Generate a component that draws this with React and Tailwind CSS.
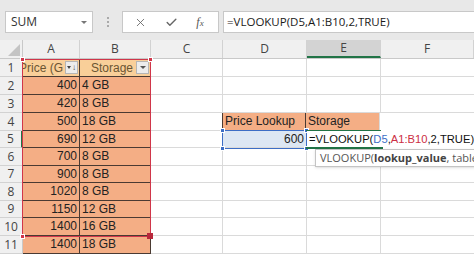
import { X, Check } from 'lucide-react';

const ROW_H = [18, 18, 18, 18, 17, 18, 17, 18, 17, 18, 18];
const PRICES = [400, 420, 500, 690, 700, 900, 1020, 1150, 1400, 1400];
const STORAGE = ['4 GB', '8 GB', '18 GB', '12 GB', '8 GB', '8 GB', '8 GB', '12 GB', '16 GB', '18 GB'];

const cellFont = { fontFamily: '"Liberation Sans", Arial, sans-serif' };
const uiFont = { fontFamily: '"Open Sans", "Liberation Sans", sans-serif' };

function Handle({ className }) {
  return <div className={`absolute w-[5px] h-[5px] border border-white ${className}`} />;
}

function Toolbar() {
  return (
    <div className="h-[40px] bg-[#e8e8e8] flex items-start pt-[11px] pl-[5px]" style={uiFont}>
      <div className="w-[88px] h-[22px] bg-white border border-[#c8c8c8] flex items-center justify-between pl-[5px] pr-[5px]">
        <span className="text-[12px] text-[#333]">SUM</span>
        <span className="w-0 h-0 border-l-[3px] border-r-[3px] border-t-[3px] border-l-transparent border-r-transparent border-t-[#777]" />
      </div>
      <div className="w-[29px] h-[22px] flex flex-col items-center justify-center gap-[2px]">
        <span className="w-[2px] h-[2px] bg-[#aaa]" />
        <span className="w-[2px] h-[2px] bg-[#aaa]" />
        <span className="w-[2px] h-[2px] bg-[#aaa]" />
      </div>
      <div className="w-[97px] h-[22px] bg-white border border-[#c8c8c8] flex items-center">
        <div className="w-[33px] flex justify-center pl-[2px]">
          <X size={13} strokeWidth={1.6} color="#666" />
        </div>
        <div className="w-[30px] flex justify-center">
          <Check size={13} strokeWidth={2.6} color="#666" />
        </div>
        <div className="w-[28px] flex justify-center">
          <span className="text-[12px] italic text-[#555]" style={{ fontFamily: '"Liberation Serif", serif' }}>
            f<span className="text-[9px]">x</span>
          </span>
        </div>
      </div>
      <div className="ml-[4px] flex-1 h-[22px] bg-white border border-[#c8c8c8] border-r-0 flex items-center pl-[3px]">
        <span className="text-[11.5px] text-[#1a1a1a] whitespace-nowrap">=VLOOKUP(D5,A1:B10,2,TRUE)</span>
      </div>
    </div>
  );
}

function HeaderRow() {
  const cols = [
    ['A', 'w-[57px]'],
    ['B', 'w-[71px]'],
    ['C', 'w-[72px]'],
    ['D', 'w-[84px]'],
    ['E', 'w-[74px]'],
    ['F', 'flex-1'],
  ];
  return (
    <div className="h-[19px] flex bg-[#f0f0f0] border-b border-[#c9c9c9]" style={uiFont}>
      <div className="w-[23px] border-r border-[#c9c9c9] relative">
        <svg className="absolute right-[2px] bottom-[2px]" width="12" height="12">
          <polygon points="12,0 12,12 0,12" fill="#c4c4c4" />
        </svg>
      </div>
      {cols.map(([k, w]) => (
        <div
          key={k}
          className={`${w} flex items-center justify-center text-[12px] text-[#444] border-r border-[#d2d2d2] ${
            k === 'E' ? 'bg-[#d3d3d3] border-b-2 border-b-[#217346]' : ''
          }`}
        >
          {k}
        </div>
      ))}
    </div>
  );
}

function Row({ n, h }) {
  const dark = 'border-[#4a3a32]';
  const grid = 'border-[#dadada]';
  const i = n - 2;
  let a = null;
  let b = null;
  let aCls = `w-[57px] border-r border-b ${grid}`;
  let bCls = `w-[71px] border-r border-b ${grid}`;
  let dCls = `w-[84px] border-r border-b ${grid}`;
  let eCls = `w-[74px] border-r border-b ${grid}`;
  let d = null;
  let e = null;

  if (n === 1) {
    aCls = `w-[57px] border-r border-b ${dark} bg-[#f9cf99] overflow-hidden`;
    bCls = `w-[71px] border-r border-b ${dark} bg-[#f9cf99]`;
    a = (
      <div className="flex items-center h-full">
        <span className="ml-[-4px] whitespace-nowrap text-[#6b5533] flex-1 overflow-hidden">Price (G</span>
        <span className="w-[13px] h-[13px] mr-[1px] bg-[#ececec] border border-[#b5b5b5] flex items-center justify-center gap-[1px]">
          <span className="w-0 h-0 border-l-[2px] border-r-[2px] border-t-[3px] border-l-transparent border-r-transparent border-t-[#444]" />
          <span className="text-[8px] leading-none text-[#444]">↓</span>
        </span>
      </div>
    );
    b = (
      <div className="flex items-center h-full">
        <span className="flex-1 text-center pl-[8px] text-[#6b5533]">Storage</span>
        <span className="w-[13px] h-[13px] mr-[1px] bg-[#ececec] border border-[#b5b5b5] flex items-center justify-center">
          <span className="w-0 h-0 border-l-[3px] border-r-[3px] border-t-[3px] border-l-transparent border-r-transparent border-t-[#555]" />
        </span>
      </div>
    );
  } else {
    aCls = `w-[57px] border-r border-b ${dark} bg-[#f4ae85] text-right pr-[2px]`;
    bCls = `w-[71px] border-r border-b ${dark} bg-[#f4ae85] pl-[2px]`;
    a = PRICES[i];
    b = STORAGE[i];
  }

  if (n === 4) {
    dCls = `w-[84px] border-l border-r border-b ${dark} bg-[#f4ae85] pl-[2px] -ml-px`;
    eCls = `w-[74px] border-r border-b border-[#dadada] bg-[#f4ae85] pl-[2px]`;
    d = 'Price Lookup';
    e = 'Storage';
  }
  if (n === 5) {
    dCls = `w-[84px] border-r border-b ${grid} bg-[#dde7f3] text-right pr-[2px]`;
    d = '600';
  }

  return (
    <div className="flex bg-white" style={{ height: h, ...cellFont }}>
      <div
        className={`w-[23px] flex items-center justify-center text-[12px] text-[#444] bg-[#f0f0f0] border-b border-[#d2d2d2] ${
          n === 5 ? 'bg-[#d6d6d6] border-r-2 border-r-[#217346]' : 'border-r border-r-[#c9c9c9]'
        }`}
        style={uiFont}
      >
        {n}
      </div>
      <div className={`${aCls} text-[12px] text-[#222] leading-[16px]`}>{a}</div>
      <div className={`${bCls} text-[12px] text-[#222] leading-[16px]`}>{b}</div>
      <div className={`w-[72px] border-r border-b ${grid}`} />
      <div className={`${dCls} text-[12px] text-[#222] leading-[16px]`}>{d}</div>
      <div className={`${eCls} text-[12px] text-[#222] leading-[16px]`}>{e}</div>
      <div className={`flex-1 border-b ${grid}`} />
    </div>
  );
}

export default function App() {
  return (
    <div className="w-[474px] h-[256px] overflow-hidden bg-white relative">
      <Toolbar />
      <HeaderRow />
      <div>
        {ROW_H.map((h, idx) => (
          <Row key={idx} n={idx + 1} h={h} />
        ))}
      </div>

      {/* A1:B10 reference outline */}
      <div className="absolute left-[22px] top-[59px] w-[129px] h-[178px] border border-[#d0364a]" />
      <Handle className="left-[20px] top-[57px] bg-[#d0364a]" />
      <Handle className="left-[148px] top-[57px] bg-[#d0364a]" />
      <Handle className="left-[20px] top-[234px] bg-[#d0364a]" />
      <div className="absolute left-[147px] top-[233px] w-[6px] h-[6px] bg-[#b8283c]" />

      {/* D5 reference outline */}
      <div className="absolute left-[222px] top-[130px] w-[85px] h-[19px] border border-[#3d6ec5]" />
      <Handle className="left-[220px] top-[128px] bg-[#3d6ec5]" />
      <Handle className="left-[304px] top-[128px] bg-[#3d6ec5]" />
      <Handle className="left-[220px] top-[146px] bg-[#3d6ec5]" />
      <Handle className="left-[304px] top-[146px] bg-[#3d6ec5]" />

      {/* E5 editing cell */}
      <div className="absolute left-[307px] top-[130px] w-[167px] h-[18px] bg-white flex items-center pl-[2px] text-[11.2px] text-[#111] whitespace-nowrap" style={cellFont}>
        =VLOOKUP(
        <span className="w-px h-[15px] bg-black" />
        <span className="text-[#3d6ec5]">D5</span>,<span className="text-[#cc2f44]">A1:B10</span>,2,TRUE)
      </div>
      <div className="absolute left-[306px] top-[130px] w-[75px] h-px bg-[#217346]" />
      <div className="absolute left-[306px] top-[147px] w-[75px] h-[2px] bg-[#217346]" />
      <div className="absolute left-[379px] top-[147px] w-[4px] h-[4px] bg-[#217346]" />

      {/* function tooltip */}
      <div
        className="absolute left-[315px] top-[149px] w-[170px] h-[18px] bg-white border border-[#c4c4c4] shadow-sm flex items-center pl-[4px] text-[11px] text-[#555] whitespace-nowrap"
        style={uiFont}
      >
        VLOOKUP(<b className="text-[#444]">lookup_value</b>, table_array
      </div>
    </div>
  );
}
